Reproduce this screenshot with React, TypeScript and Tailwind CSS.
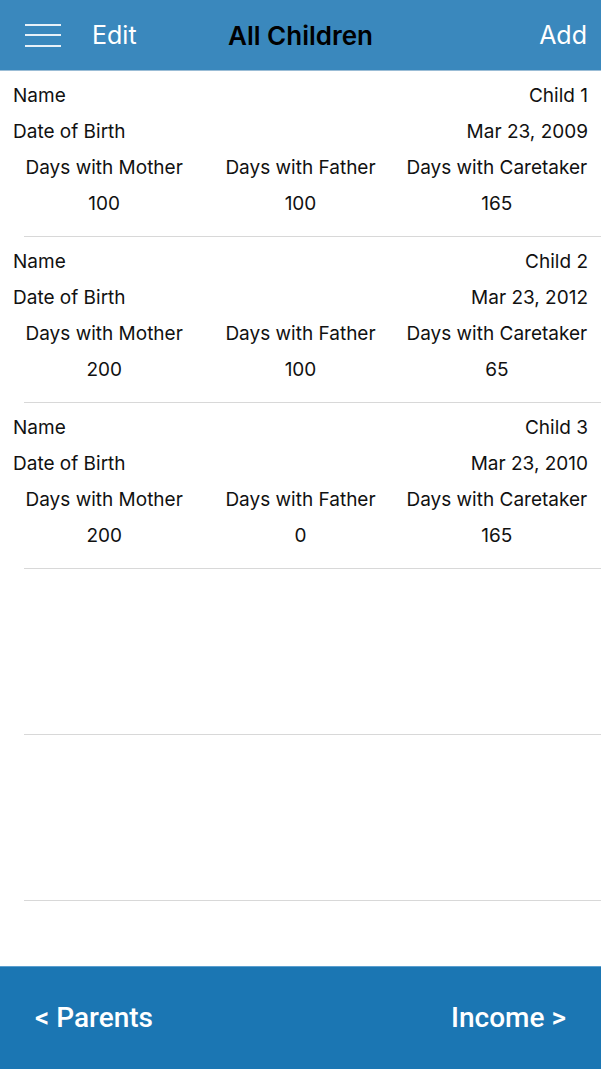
import React from "react";

const children = [
  { name: "Child 1", dob: "Mar 23, 2009", m: "100", f: "100", c: "165" },
  { name: "Child 2", dob: "Mar 23, 2012", m: "200", f: "100", c: "65" },
  { name: "Child 3", dob: "Mar 23, 2010", m: "200", f: "0", c: "165" },
];

export default function App() {
  return (
    <div
      className="w-[601px] h-[1069px] flex flex-col bg-white text-[#111]"
      style={{ fontFamily: "Inter, 'Open Sans', sans-serif" }}
    >
      <div className="h-[71px] shrink-0 bg-[#3a88bd] border-b border-[#9bbdd6] flex items-center relative pt-[1px]">
        <div className="ml-[25px] w-[36px] flex flex-col gap-[8.5px] -mt-[1px]">
          <div className="h-[2px] bg-[#e8f1f8]" />
          <div className="h-[2px] bg-[#e8f1f8]" />
          <div className="h-[2px] bg-[#e8f1f8]" />
        </div>
        <span className="ml-[31px] text-white text-[25px] font-normal">Edit</span>
        <span className="absolute left-0 right-0 text-center text-[26px] font-semibold text-black pointer-events-none">
          All Children
        </span>
        <span className="ml-auto mr-[14px] text-white text-[25px] font-normal">Add</span>
      </div>
      <div className="flex-1 flex flex-col">
        {children.map((ch) => (
          <div key={ch.name} className="h-[166px] shrink-0 flex flex-col relative text-[19px]">
            <div className="flex justify-between px-[13px] h-[36px] items-center mt-[7px]">
              <span>Name</span>
              <span>{ch.name}</span>
            </div>
            <div className="flex justify-between px-[13px] h-[36px] items-center">
              <span>Date of Birth</span>
              <span>{ch.dob}</span>
            </div>
            <div className="grid grid-cols-3 px-[6px] h-[36px] items-center text-center">
              <span>Days with Mother</span>
              <span>Days with Father</span>
              <span>Days with Caretaker</span>
            </div>
            <div className="grid grid-cols-3 px-[6px] h-[36px] items-center text-center">
              <span>{ch.m}</span>
              <span>{ch.f}</span>
              <span>{ch.c}</span>
            </div>
            <div className="absolute bottom-0 left-[24px] right-0 h-px bg-[#d8d8d8]" />
          </div>
        ))}
        {[0, 1].map((i) => (
          <div key={i} className="h-[166px] shrink-0 relative">
            <div className="absolute bottom-0 left-[24px] right-0 h-px bg-[#d8d8d8]" />
          </div>
        ))}
      </div>
      <div
        className="h-[103px] shrink-0 bg-[#1b76b3] border-t border-[#5b9fcf] flex items-center justify-between px-[35px] text-white text-[28px] font-medium"
        style={{ fontFamily: "Roboto, sans-serif" }}
      >
        <span>&lt; Parents</span>
        <span>Income &gt;</span>
      </div>
    </div>
  );
}
